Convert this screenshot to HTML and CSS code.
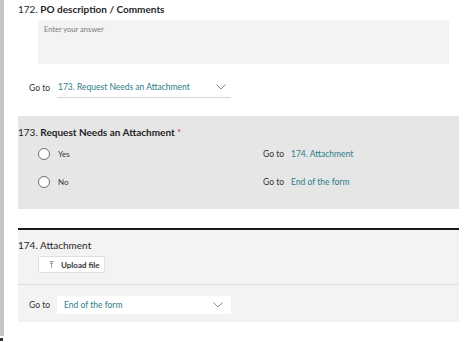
FILE: index.html
```html
<!DOCTYPE html>
<html lang="en">
<head>
    <meta charset="UTF-8">
    <meta name="viewport" content="width=device-width, initial-scale=1.0">
    <title>Branching</title>
    <link rel="stylesheet" href="styles.css">
</head>
<body>
    <div class="page">
        <div class="side">
            <div class="side-bar"></div>
            <div class="side-dot"></div>
        </div>
        <div class="form">
            <!-- 172 -->
            <div class="question">
                <div class="q-title">172. <b>PO description / Comments</b></div>
                <div class="answer-box">Enter your answer</div>
                <div class="goto">
                    <span class="goto-label">Go to</span>
                    <div class="dropdown underline">
                        <span>173. Request Needs an Attachment</span>
                        <svg class="chevron" width="10" height="6" viewBox="0 0 10 6"><path d="M0.5 0.5 L5 5 L9.5 0.5" fill="none" stroke="#8a8a8a" stroke-width="1"/></svg>
                    </div>
                </div>
            </div>

            <!-- 173 -->
            <div class="question choice">
                <div class="q-title">173. <b>Request Needs an Attachment</b> <span class="req">*</span></div>
                <div class="options">
                    <div class="option">
                        <span class="radio"></span>
                        <span class="option-text">Yes</span>
                        <span class="goto-label">Go to</span>
                        <span class="goto-link">174. Attachment</span>
                    </div>
                    <div class="option">
                        <span class="radio"></span>
                        <span class="option-text">No</span>
                        <span class="goto-label">Go to</span>
                        <span class="goto-link">End of the form</span>
                    </div>
                </div>
            </div>

            <!-- 174 -->
            <div class="question upload">
                <div class="upload-top">
                    <div class="q-title">174. Attachment</div>
                    <div class="upload-btn">
                        <svg width="5" height="7" viewBox="0 0 5 7"><path d="M0.5 0.5 H4.5 M2.5 1.5 V7 M1 3 L2.5 1.5 L4 3" fill="none" stroke="#888" stroke-width="0.8"/></svg>
                        Upload file
                    </div>
                </div>
                <div class="goto bottom">
                    <span class="goto-label">Go to</span>
                    <div class="dropdown boxed">
                        <span>End of the form</span>
                        <svg class="chevron" width="10" height="6" viewBox="0 0 10 6"><path d="M0.5 0.5 L5 5 L9.5 0.5" fill="none" stroke="#8a8a8a" stroke-width="1"/></svg>
                    </div>
                </div>
            </div>
        </div>
    </div>
</body>
</html>
```

FILE: styles.css
```css
body {
    margin: 0;
    background-color: white;
    font-family: Lato, "Noto Sans", sans-serif;
    color: #1f1f1f;
}

.page {
    display: flex;
    width: 474px;
    height: 342px;
    overflow: hidden;
}

.side {
    display: flex;
    flex-direction: column;
    gap: 2px;
    width: 4px;
    flex-shrink: 0;
}

.side-bar {
    height: 336px;
    background-color: #c6c6c6;
}

.side-dot {
    width: 3px;
    height: 3px;
    background-color: #333;
}

.form {
    padding-left: 14px;
    width: 441px;
}

.question {
    width: 441px;
}

.q-title {
    font-size: 10px;
    line-height: 18px;
    color: #1f1f1f;
}

.q-title b {
    font-weight: 700;
}

.req {
    color: #c4314b;
    font-size: 9px;
}

.answer-box {
    margin: 2px 0 0 20px;
    width: 411px;
    height: 44px;
    padding: 5px 6px;
    box-sizing: border-box;
    background-color: #f3f3f3;
    font-size: 7.5px;
    color: #7a7a7a;
}

.goto {
    display: flex;
    align-items: center;
    margin-top: 13px;
    padding-left: 11px;
}

.goto-label {
    flex-shrink: 0;
    font-size: 8.5px;
    color: #333;
    width: 28px;
}

.dropdown {
    display: flex;
    align-items: center;
    justify-content: space-between;
    flex-shrink: 0;
    width: 174px;
    box-sizing: border-box;
    padding: 0 5px 0 1px;
    font-size: 8.5px;
    color: #2e7d8a;
}

.dropdown.underline {
    height: 21px;
    border-bottom: 1px solid #d4d4d4;
}

.dropdown.boxed {
    height: 18px;
    background-color: white;
    padding: 0 8px 0 7px;
}

.chevron {
    display: block;
}

/* 173 */
.choice {
    margin-top: 18px;
    height: 93px;
    box-sizing: border-box;
    padding-top: 7px;
    background-color: #e6e6e6;
}

.options {
    display: flex;
    flex-direction: column;
    gap: 8px;
    margin-top: 2px;
}

.option {
    display: grid;
    grid-template-columns: 20px 205px 28px auto;
    align-items: center;
    height: 20px;
    padding-left: 20px;
    font-size: 8.5px;
}

.radio {
    width: 12px;
    height: 12px;
    box-sizing: border-box;
    border: 1px solid #6e6e6e;
    border-radius: 50%;
    background-color: white;
}

.option-text {
    color: #333;
    font-size: 8px;
}

.goto-link {
    color: #2e7d8a;
}

/* 174 */
.upload {
    margin-top: 19px;
    border-top: 2px solid #1b1b1b;
    background-color: #f3f3f3;
}

.upload-top {
    padding-top: 6px;
    padding-bottom: 11px;
    border-bottom: 1px solid #dcdcdc;
}

.upload-btn {
    display: flex;
    align-items: center;
    gap: 7px;
    margin: 2px 0 0 20px;
    width: 67px;
    height: 17px;
    box-sizing: border-box;
    padding-left: 10px;
    background-color: white;
    border: 1px solid #e0e0e0;
    border-radius: 2px;
    font-size: 8px;
    font-weight: 700;
    color: #333;
}

.goto.bottom {
    margin-top: 0;
    padding-top: 11px;
    padding-bottom: 8px;
}
```
